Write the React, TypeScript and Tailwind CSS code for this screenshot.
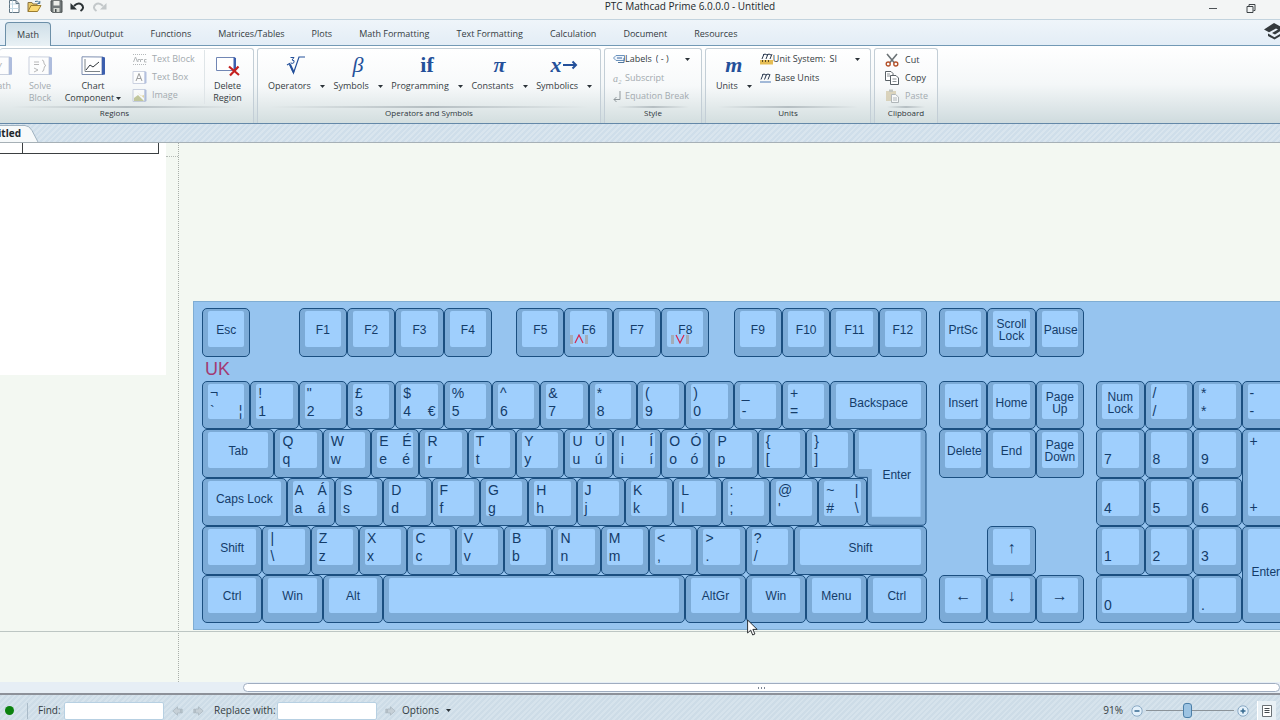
import type { ReactNode } from "react";

type KeyDef = {
  cls: string;
  label?: string[];
  arrow?: string;
  left?: string[];
  right?: string[];
};

const UNIT = "col-span-4";

const tabs = [
  "Input/Output",
  "Functions",
  "Matrices/Tables",
  "Plots",
  "Math Formatting",
  "Text Formatting",
  "Calculation",
  "Document",
  "Resources",
];

const functionKeys: KeyDef[] = [
  { cls: "col-span-4", label: ["Esc"] },
  { cls: "col-span-4 col-start-9", label: ["F1"] },
  { cls: UNIT, label: ["F2"] },
  { cls: UNIT, label: ["F3"] },
  { cls: UNIT, label: ["F4"] },
  { cls: "col-span-4 col-start-27", label: ["F5"] },
  { cls: UNIT, label: ["F6"] },
  { cls: UNIT, label: ["F7"] },
  { cls: UNIT, label: ["F8"] },
  { cls: "col-span-4 col-start-45", label: ["F9"] },
  { cls: UNIT, label: ["F10"] },
  { cls: UNIT, label: ["F11"] },
  { cls: UNIT, label: ["F12"] },
];

const pair = (top: string, bottom: string, right?: string[]): KeyDef => ({
  cls: UNIT,
  left: [top, bottom],
  right,
});

const numberRow: KeyDef[] = [
  pair("¬", "`", ["", "¦"]),
  pair("!", "1"),
  pair('"', "2"),
  pair("£", "3"),
  pair("$", "4", ["", "€"]),
  pair("%", "5"),
  pair("^", "6"),
  pair("&", "7"),
  pair("*", "8"),
  pair("(", "9"),
  pair(")", "0"),
  pair("_", "-"),
  pair("+", "="),
  { cls: "col-span-8", label: ["Backspace"] },
];

const topRow: KeyDef[] = [
  { cls: "col-span-6", label: ["Tab"] },
  pair("Q", "q"),
  pair("W", "w"),
  pair("E", "e", ["É", "é"]),
  pair("R", "r"),
  pair("T", "t"),
  pair("Y", "y"),
  pair("U", "u", ["Ú", "ú"]),
  pair("I", "i", ["Í", "í"]),
  pair("O", "o", ["Ó", "ó"]),
  pair("P", "p"),
  pair("{", "["),
  pair("}", "]"),
];

const homeRow: KeyDef[] = [
  { cls: "col-span-7", label: ["Caps Lock"] },
  pair("A", "a", ["Á", "á"]),
  pair("S", "s"),
  pair("D", "d"),
  pair("F", "f"),
  pair("G", "g"),
  pair("H", "h"),
  pair("J", "j"),
  pair("K", "k"),
  pair("L", "l"),
  pair(":", ";"),
  pair("@", "'"),
  // shares a column with the wide top of Enter, so it is placed explicitly
  {
    cls: "col-span-4 col-start-52 row-start-3",
    left: ["~", "#"],
    right: ["|", "\\"],
  },
];

const bottomRow: KeyDef[] = [
  { cls: "col-span-5 col-start-1 row-start-4", label: ["Shift"] },
  pair("|", "\\"),
  pair("Z", "z"),
  pair("X", "x"),
  pair("C", "c"),
  pair("V", "v"),
  pair("B", "b"),
  pair("N", "n"),
  pair("M", "m"),
  pair("<", ","),
  pair(">", "."),
  pair("?", "/"),
  { cls: "col-span-11", label: ["Shift"] },
];

const spaceRow: KeyDef[] = [
  { cls: "col-span-5", label: ["Ctrl"] },
  { cls: "col-span-5", label: ["Win"] },
  { cls: "col-span-5", label: ["Alt"] },
  { cls: "col-span-25" },
  { cls: "col-span-5", label: ["AltGr"] },
  { cls: "col-span-5", label: ["Win"] },
  { cls: "col-span-5", label: ["Menu"] },
  { cls: "col-span-5", label: ["Ctrl"] },
];

const systemKeys: KeyDef[] = [
  { cls: "", label: ["PrtSc"] },
  { cls: "", label: ["Scroll", "Lock"] },
  { cls: "", label: ["Pause"] },
];

const navKeys: KeyDef[] = [
  { cls: "", label: ["Insert"] },
  { cls: "", label: ["Home"] },
  { cls: "", label: ["Page", "Up"] },
  { cls: "", label: ["Delete"] },
  { cls: "", label: ["End"] },
  { cls: "", label: ["Page", "Down"] },
  { cls: "col-start-2 row-start-4", arrow: "↑" },
  { cls: "col-start-1 row-start-5", arrow: "←" },
  { cls: "row-start-5", arrow: "↓" },
  { cls: "row-start-5", arrow: "→" },
];

const numpadKeys: KeyDef[] = [
  { cls: "", label: ["Num", "Lock"] },
  { cls: "", left: ["/", "/"] },
  { cls: "", left: ["*", "*"] },
  { cls: "", left: ["-", "-"] },
  { cls: "", left: ["", "7"] },
  { cls: "", left: ["", "8"] },
  { cls: "", left: ["", "9"] },
  { cls: "row-span-2", left: ["+", "+"] },
  { cls: "", left: ["", "4"] },
  { cls: "", left: ["", "5"] },
  { cls: "", left: ["", "6"] },
  { cls: "", left: ["", "1"] },
  { cls: "", left: ["", "2"] },
  { cls: "", left: ["", "3"] },
  { cls: "row-span-2", label: ["Enter"] },
  { cls: "col-span-2", left: ["", "0"] },
  { cls: "", left: ["", "."] },
];

const Legend = ({ lines }: { lines: string[] }) => (
  <span className="flex flex-col justify-between">
    {lines.map((line, i) => (
      <span key={i} className="block h-[18px] shrink-0">
        {line}
      </span>
    ))}
  </span>
);

const Key = ({ def }: { def: KeyDef }) => (
  <kbd
    className={`${def.cls} block min-w-0 rounded-[5px] border border-[#1b4f80] bg-[#7cabd7] px-[5px] pt-0.5 pb-[9px] font-[Liberation_Sans,sans-serif]`}
  >
    <span className="flex h-full items-center rounded-[2px] bg-[#9fcffd] px-0.5">
      {def.label && (
        <span className="w-full whitespace-nowrap pt-0.5 text-center text-xs leading-3">
          {def.label.map((line) => (
            <span key={line} className="block">
              {line}
            </span>
          ))}
        </span>
      )}
      {def.arrow && (
        <span className="w-full pt-0.5 text-center text-base leading-5">
          {def.arrow}
        </span>
      )}
      {def.left && (
        <span className="flex h-full w-full justify-between text-sm leading-[18px]">
          <Legend lines={def.left} />
          {def.right && <Legend lines={def.right} />}
        </span>
      )}
    </span>
  </kbd>
);

const Keys = ({ defs }: { defs: KeyDef[] }) => (
  <>
    {defs.map((def, i) => (
      <Key key={i} def={def} />
    ))}
  </>
);

const EnterKey = () => (
  <kbd className="relative col-span-6 col-start-55 row-span-2 row-start-2 block font-[Liberation_Sans,sans-serif]">
    <svg
      className="absolute inset-0 h-full w-full"
      viewBox="0 0 73 97"
      preserveAspectRatio="none"
    >
      <path
        d="M4.500 .5H68.500Q72.500 .5 72.500 4.500V92Q72.500 96.500 68.500 96.500H18Q13.500 96.500 13.500 92V48.500H4.500Q.5 48.500 .5 44.500V4.500Q.5 .5 4.500 .5Z"
        fill="#7cabd7"
        stroke="#1b4f80"
      />
      <path d="M5 3H67V88H18V40H5Z" fill="#9fcffd" />
    </svg>
    <span className="relative flex h-full items-center justify-center pb-1.5 pl-3 text-xs">
      Enter
    </span>
  </kbd>
);

const RegionMark = ({ className, d }: { className: string; d: string }) => (
  <svg
    className={`${className} absolute top-[26px] h-[11px] w-[18px]`}
    viewBox="0 0 18 11"
    fill="none"
  >
    <path d="M0 1h3v9H0zM15 1h3v9h-3z" fill="#a3adb9" />
    <path d={d} stroke="#d5264f" strokeWidth="1.200" />
  </svg>
);

const Keyboard = () => (
  <section
    aria-label="UK keyboard"
    className="w-max border border-[#7fadd3] bg-[#96c4ef] pt-[6px] pr-2 pb-[6px] pl-2 text-[#143c69]"
  >
    <div className="flex gap-3">
      <div className="relative grid h-[49px] w-[725px] grid-cols-60">
        <Keys defs={functionKeys} />
        <RegionMark className="left-[368px]" d="M5 9 9 1l4 8" />
        <RegionMark className="left-[469px]" d="M5 1 9 9l4-8" />
      </div>
      <div className="grid w-[145px] grid-cols-3">
        <Keys defs={systemKeys} />
      </div>
    </div>
    <div className="h-6 pl-[3px] font-[Liberation_Sans,sans-serif] text-lg leading-6 text-[#a33a72]">
      UK
    </div>
    <div className="flex h-[242px] gap-3">
      <div className="grid w-[725px] grid-cols-60 grid-rows-5">
        <Keys defs={numberRow} />
        <Keys defs={topRow} />
        <EnterKey />
        <Keys defs={homeRow} />
        <Keys defs={bottomRow} />
        <Keys defs={spaceRow} />
      </div>
      <div className="grid w-[145px] grid-cols-3 grid-rows-5">
        <Keys defs={navKeys} />
      </div>
      <div className="grid w-[194px] grid-cols-4 grid-rows-5">
        <Keys defs={numpadKeys} />
      </div>
    </div>
  </section>
);

const Caret = () => (
  <svg className="h-[3px] w-[5px] shrink-0" viewBox="0 0 5 3">
    <path d="M0 0h5L2.500 3z" fill="#2b3238" />
  </svg>
);

const Group = ({
  title,
  className,
  children,
}: {
  title: string;
  className: string;
  children: ReactNode;
}) => (
  <section
    className={`${className} flex shrink-0 flex-col overflow-hidden rounded-t-[3px] border border-b-0 border-[#c3ced6] bg-linear-to-b from-white via-[#f7f9fa] to-[#d3dedf]`}
  >
    <div className="flex h-[57px] items-start">{children}</div>
    <div className="mx-3 h-0.5 bg-linear-to-r from-transparent via-[#b5bec2] to-transparent" />
    <h2 className="text-center text-[8px] leading-[10px] text-[#2f363c]">{title}</h2>
  </section>
);

const MathButton = ({
  icon,
  label,
}: {
  icon: ReactNode;
  label: string;
}) => (
  <button className="flex flex-col items-center">
    <span className="flex h-[31px] items-center font-[Liberation_Serif,serif] text-[22px] leading-[30px] text-[#24509a]">
      {icon}
    </span>
    <span className="flex items-center gap-[9px] leading-3">
      {label}
      <Caret />
    </span>
  </button>
);

const SmallButton = ({
  icon,
  label,
  disabled,
}: {
  icon: ReactNode;
  label: string;
  disabled?: boolean;
}) => (
  <button
    disabled={disabled}
    className="flex h-[18px] items-center gap-1 whitespace-nowrap disabled:text-[#a3aaaf]"
  >
    {icon}
    {label}
  </button>
);

const BoxIcon = ({ children, faded }: { children: ReactNode; faded?: boolean }) => (
  <svg
    className={faded ? "h-5 w-[25px] opacity-40" : "h-5 w-[25px]"}
    viewBox="0 0 25 20"
    fill="none"
  >
    <path d="M1 .8 21 1v17.500H1z" fill="#fff" stroke="#7e8fb0" />
    <path d="M21 .5 24 1.500v17L21 19z" fill="#3c5fae" />
    {children}
  </svg>
);

const SmallBox = ({ children }: { children: ReactNode }) => (
  <svg className="h-[13px] w-4 opacity-50" viewBox="0 0 16 13" fill="none">
    <path d="M1 .5h12v12H1z" fill="#fff" stroke="#a0abc8" />
    <path d="M12.500 0 14.500 1v11l-2 1z" fill="#7088c4" />
    {children}
  </svg>
);

const ArrowIcon = ({ back }: { back?: boolean }) => (
  <svg
    className={back ? "h-[10px] w-[11px] -scale-x-100" : "h-[10px] w-[11px]"}
    viewBox="0 0 11 10"
  >
    <path
      d="M.8 3h1v4h-1zM2.500 3H5.500V.8L10.200 5 5.500 9.200V7h-3z"
      fill="#c6d0d7"
      stroke="#a7b4bd"
      strokeWidth=".7"
    />
  </svg>
);

const ZoomIcon = ({ plus }: { plus?: boolean }) => (
  <svg className="h-3 w-3" viewBox="0 0 12 12" fill="none">
    <circle cx="6" cy="6" r="5.200" fill="#e3f0fa" stroke="#8aa9c4" />
    <path d={plus ? "M3.500 6h5M6 3.500v5" : "M3.500 6h5"} stroke="#35688f" strokeWidth="1.500" />
  </svg>
);

const TitleBar = () => (
  <header className="flex h-[19px] shrink-0 items-start bg-[#f3f5f5]">
    <div className="flex w-[200px] items-center gap-[7px] pl-2">
      <button aria-label="New">
        <svg className="h-[13px] w-3" viewBox="0 0 12 13" fill="none">
          <path d="M1.500.5h6.500l3 3v9H1.500z" fill="#fff" stroke="#5f7482" />
          <path d="M4.500.5v12M1.500 4h9M1.500 8.500h9" stroke="#c6dbe5" />
          <path d="M8 .5v3h3" stroke="#5f7482" />
        </svg>
      </button>
      <button aria-label="Open">
        <svg className="h-[13px] w-[15px]" viewBox="0 0 15 13" fill="none">
          <path d="M1 11.500v-9h4l1 1.500h4v2" fill="#e9c968" stroke="#8a7340" />
          <path d="m1 11.500 3-6h10l-3.500 6z" fill="#fbd972" stroke="#9b7c2f" />
          <path d="M8 1.500q3-1.500 4.500 1.500M12.800 1v2.500h-2.500" stroke="#43708e" />
        </svg>
      </button>
      <button aria-label="Save" className="pl-px">
        <svg className="h-[13px] w-[13px]" viewBox="0 0 13 13" fill="none">
          <path d="M1 .8h11v11.500H2.500L1 11z" fill="#72797a" stroke="#4a5051" />
          <path d="M3.500 1h6v4.500h-6z" fill="#eceeea" />
          <path d="M3.500 8h6v4h-6z" fill="#d4d8d2" />
          <path d="M5 9h1.500v3H5z" fill="#4a5051" />
        </svg>
      </button>
      <button aria-label="Undo">
        <svg className="h-[11px] w-[15px]" viewBox="0 0 15 11" fill="none">
          <path d="M4 5q4-4 7.500-1.500Q15 7 10.500 10" stroke="#2c3336" strokeWidth="2" />
          <path d="M.5 2v6.500H7z" fill="#2c3336" />
        </svg>
      </button>
      <button aria-label="Redo" disabled>
        <svg className="h-[11px] w-[15px] -scale-x-100" viewBox="0 0 15 11" fill="none">
          <path d="M4 5q4-4 7.500-1.500Q15 7 10.500 10" stroke="#c3c8ca" strokeWidth="2" />
          <path d="M.5 2v6.500H7z" fill="#c3c8ca" />
        </svg>
      </button>
    </div>
    <h1 className="flex-1 text-center text-[10px] leading-3 text-[#22282c]">
      PTC Mathcad Prime 6.0.0.0 - Untitled
    </h1>
    <div className="flex w-[100px] items-center gap-7 pt-0.5 pl-7">
      <button aria-label="Minimize">
        <svg className="h-3 w-[10px]" viewBox="0 0 10 12">
          <path d="M1 6h8v1H1z" fill="#4c5256" />
        </svg>
      </button>
      <button aria-label="Restore">
        <svg className="h-3 w-[10px]" viewBox="0 0 10 12" fill="none" stroke="#3c4246">
          <path d="M1 4.500h6v6H1zM3 4V2.500h6v6H7.500" />
        </svg>
      </button>
    </div>
  </header>
);

const TabBar = () => (
  <nav className="flex h-[27px] shrink-0 items-end border-t border-b border-t-[#c2d3de] border-b-[#7299b5] bg-linear-to-b from-[#eff5fa] to-[#e3edf6] pl-[5px]">
    <button className="-mb-px h-6 w-[46px] rounded-t-[4px] border border-b-0 border-[#6c8fa8] bg-linear-to-b from-[#cfdfe8] to-[#e9f1f5]">
      Math
    </button>
    <div className="flex flex-1 gap-px pl-1">
      {tabs.map((tab) => (
        <button key={tab} className="h-[22px] px-[13px] whitespace-nowrap">
          {tab}
        </button>
      ))}
    </div>
    <button aria-label="Learn" className="-mr-1 mb-1">
      <svg className="h-5 w-5" viewBox="0 0 20 20">
        <path d="M0 8.500 10 2l10 5.500-9 6L8 12l6-3.500-2-1-7 3.800z" fill="#343a3d" />
        <path d="m4 12.500 6.500 3.700 7-4.200v2.500l-7 4L4 15z" fill="#343a3d" />
      </svg>
    </button>
  </nav>
);

const Ribbon = () => (
  <div className="flex h-[78px] shrink-0 items-stretch gap-[3px] overflow-hidden border-b border-[#6488a8] bg-linear-to-b from-white via-[#f4f7f8] to-[#cfdbde] pt-0.5">
    <Group title="Regions" className="w-[254px] border-l-0 [&>h2]:pr-6">
      <div className="flex h-full w-full justify-end pt-px pr-[3px] leading-3">
        <button disabled className="flex w-6 shrink-0 flex-col items-center self-start pt-1.5 text-[#a3aaaf]">
          <BoxIcon faded>
            <text x="8" y="14" fontSize="12" fontStyle="italic" fill="#555">
              y
            </text>
          </BoxIcon>
          <span className="pt-1">Math</span>
        </button>
        <button disabled className="ml-3 flex w-8 shrink-0 flex-col items-center self-start pt-1.5 text-[#a3aaaf]">
          <BoxIcon faded>
            <path d="M6 6h5M6 8.500h5M6 12l4 2-4 2M14 4q2 0 2 3 0 2 2 2.500-2 .5-2 3 0 3-2 3" stroke="#555" />
          </BoxIcon>
          <span className="pt-1">
            Solve
            <br />
            Block
          </span>
        </button>
        <button className="ml-1.5 flex w-[62px] shrink-0 flex-col items-center self-start pt-1.5">
          <BoxIcon>
            <path d="M4 3v12.500h15" stroke="#7c8488" />
            <path d="m5 14 4-5 3 2 6-5" stroke="#30363a" />
          </BoxIcon>
          <span className="pt-1">Chart</span>
          <span className="flex items-center gap-0.5">
            Component
            <Caret />
          </span>
        </button>
        <div className="flex w-20 shrink-0 flex-col pl-2">
          <SmallButton
            disabled
            label="Text Block"
            icon={
              <svg className="h-[13px] w-4 opacity-50" viewBox="0 0 16 13" fill="none" stroke="#6f7679">
                <path d="M1 1.500h14M1 11.500h14" strokeDasharray="1 1" />
                <path d="m1.500 9 2-5 2 5M6 9V6.500h2M8.500 9V6.500H11M14.500 6.500h-2V9h2" />
              </svg>
            }
          />
          <SmallButton
            disabled
            label="Text Box"
            icon={
              <SmallBox>
                <path d="m4 10 3-7.500L10 10M5 7.500h4" stroke="#444" />
              </SmallBox>
            }
          />
          <SmallButton
            disabled
            label="Image"
            icon={
              <SmallBox>
                <path d="M2 12V9l4-3 6 6z" fill="#9a9f4a" />
                <path d="m5 3 4 4 3-1v3z" fill="#d8bc5a" />
              </SmallBox>
            }
          />
        </div>
        <button className="flex w-[46px] shrink-0 flex-col items-center self-start border-l border-[#dfe5e8] pt-1.5">
          <svg className="h-[22px] w-6" viewBox="0 0 24 22" fill="none">
            <path d="M.5 1.500h18v13H.5z" fill="#fff" stroke="#7186b4" />
            <path d="m17.500 1 2.500 1v13h-2.500z" fill="#3c5fae" />
            <path d="m13 10.500 10 8.500M22.500 10.500 14 19.500" stroke="#c4201f" strokeWidth="2.200" />
          </svg>
          <span className="pt-0.5">
            Delete
            <br />
            Region
          </span>
        </button>
      </div>
    </Group>

    <Group title="Operators and Symbols" className="w-[344px]">
      <div className="flex w-full justify-between pr-2 pl-2.5">
        <MathButton
          label="Operators"
          icon={
            <svg className="h-5 w-5" viewBox="0 0 20 20" fill="none" stroke="#24509a">
              <path d="M1 10l2.500-1.500 4 9.500L13 2h6" strokeWidth="1.200" />
              <path d="M4 9.500l3.500 7.500" strokeWidth="2" />
              <path d="M4.500 2.500h3.500L6 5q3 0 2 2.500-1 1.500-3.500 .5" />
            </svg>
          }
        />
        <MathButton label="Symbols" icon={<i>β</i>} />
        <MathButton label="Programming" icon={<b>if</b>} />
        <MathButton label="Constants" icon={<i className="font-bold">π</i>} />
        <MathButton
          label="Symbolics"
          icon={
            <>
              <i className="font-bold">x</i>
              <svg className="h-[10px] w-4" viewBox="0 0 16 10" fill="none">
                <path d="M1 5h13M10.500 1.500 14 5l-3.500 3.500" stroke="#24509a" strokeWidth="2" />
              </svg>
            </>
          }
        />
      </div>
    </Group>

    <Group title="Style" className="w-[98px]">
      <div className="flex w-full flex-col pl-2">
        <div className="flex h-5 items-center">
          <svg className="h-3 w-3" viewBox="0 0 12 12" fill="none">
            <path d="M.5 5 3 2.500h8.500v5H3z" fill="#eef4fb" stroke="#6b93bd" />
            <path d="M5 9.500h6V5" stroke="#52779d" />
            <path d="M4 5h5" stroke="#3b66a0" />
          </svg>
          <label htmlFor="labels">Labels</label>
          <select
            id="labels"
            className="ml-1 w-[29px] appearance-none bg-transparent"
            defaultValue="( - )"
          >
            <option>( - )</option>
          </select>
          <Caret />
        </div>
        <SmallButton
          disabled
          label="Subscript"
          icon={
            <span className="w-2 font-[Liberation_Serif,serif] text-[10px] italic">
              a₂
            </span>
          }
        />
        <SmallButton
          disabled
          label="Equation Break"
          icon={
            <svg className="h-[11px] w-2" viewBox="0 0 8 11" fill="none" stroke="#8f979b">
              <path d="M7 0v8.500H1M3.500 6 1 8.500 3.500 11" />
            </svg>
          }
        />
      </div>
    </Group>

    <Group title="Units" className="w-[166px]">
      <div className="flex w-full gap-2 pl-2.5">
        <MathButton label="Units" icon={<i className="font-bold">m</i>} />
        <div className="flex flex-col">
          <div className="flex h-5 items-center">
            <svg className="h-3 w-[13px]" viewBox="0 0 13 12" fill="none">
              <path d="M0 7h13v4.500H0z" fill="#e5bd55" />
              <path d="M2.500 7v2M5.500 7v2M8.500 7v2" stroke="#5c4a1f" />
              <path d="M2 6 4 1M6 6l2-5M10 6l2-5M3 2q2-2 4 0M7 2q2-2 4 0" stroke="#26354b" />
            </svg>
            <label htmlFor="unit-system" className="whitespace-nowrap">
              Unit System:
            </label>
            <select
              id="unit-system"
              className="ml-1 w-[26px] appearance-none bg-transparent"
              defaultValue="SI"
            >
              <option>SI</option>
            </select>
            <Caret />
          </div>
          <SmallButton
            label="Base Units"
            icon={
              <svg className="h-[10px] w-[11px]" viewBox="0 0 11 10" fill="none">
                <path d="M1 6.500 3 1.500M4.500 6.500l2-5M8 6.500l2-5M2 2q2-2 4 0M6 2q2-2 4 0" stroke="#26354b" />
                <path d="M0 9h11" stroke="#4d78b5" />
              </svg>
            }
          />
        </div>
      </div>
    </Group>

    <Group title="Clipboard" className="w-16">
      <div className="flex w-full flex-col pt-0.5 pl-2.5 [&>button]:gap-1.5">
        <SmallButton
          label="Cut"
          icon={
            <svg className="h-[14px] w-[14px]" viewBox="0 0 14 14" fill="none">
              <path d="M2 1l7.500 9M12 1 4.500 10" stroke="#6c7376" strokeWidth="1.600" />
              <circle cx="3.200" cy="11" r="2" stroke="#b5532c" strokeWidth="1.400" />
              <circle cx="10.800" cy="11" r="2" stroke="#b5532c" strokeWidth="1.400" />
            </svg>
          }
        />
        <SmallButton
          label="Copy"
          icon={
            <svg className="h-[14px] w-[14px]" viewBox="0 0 14 14" fill="#fff" stroke="#596166">
              <path d="M.5.5H6l2 2v7H.5z" />
              <path d="M5.500 4.500H11l2.500 2.500v6.500h-8z" />
              <path d="M2 3h3M2 5h3M7.500 8h4M7.500 10.500h4" stroke="#8b9296" />
            </svg>
          }
        />
        <SmallButton
          disabled
          label="Paste"
          icon={
            <svg className="h-[14px] w-[14px] opacity-60" viewBox="0 0 14 14">
              <path d="M1 2h10v10H1z" fill="#cdbf98" />
              <path d="M4 .5h4V3H4z" fill="#a3a89f" />
              <path d="M6.500 5.500h4l3 2.500v5.500h-7z" fill="#fff" stroke="#8b9296" />
              <path d="M8 9h4M8 11h4" stroke="#8b9296" />
            </svg>
          }
        />
      </div>
    </Group>
  </div>
);

const DocumentTabs = () => (
  <div className="flex h-[19px] shrink-0 items-end border-b border-[#a6b0b6] bg-[repeating-linear-gradient(135deg,#cfdeea_0px,#cfdeea_2px,#d9e5ee_2px,#d9e5ee_4px)]">
    <div className="relative h-[17px] w-10">
      <svg className="absolute inset-0 h-full w-full" viewBox="0 0 40 17" fill="none">
        <path d="M0 .5h25q4 0 7 5l6 11.500H0z" fill="#f6f9fa" />
        <path d="M0 .5h25q4 0 7 5l6 11.500" stroke="#9fb2c0" />
      </svg>
      <button className="relative flex h-full w-[21px] items-center justify-end text-[10px] font-bold text-[#20262a]">
        Untitled
      </button>
    </div>
  </div>
);

const Worksheet = () => (
  <main className="relative flex flex-1 overflow-hidden bg-[#f3f8f2]">
    <div className="h-[232px] w-[166px] shrink-0 bg-white">
      <div className="flex h-[11px] w-[159px] border-r border-b border-[#3b3f41]">
        <div className="w-[23px] border-r border-[#3b3f41]" />
      </div>
    </div>
    <div className="w-[13px] shrink-0 border-r border-dotted border-[#a9afaa]">
      <div className="h-[14px] border-b border-dotted border-[#b4bab5]" />
    </div>
    <div className="shrink-0 pt-[158px] pl-3.5">
      <Keyboard />
    </div>
    <div className="absolute top-[488px] left-0 h-px w-full bg-[#bcc6c3]" />
    <svg className="absolute top-[476px] left-[747px] h-[17px] w-3" viewBox="0 0 12 17">
      <path
        d="M.6 1v13l3.100-2.900 2 4.900 2.200-1-2-4.600h4.300z"
        fill="#fff"
        stroke="#1b1f22"
        strokeWidth=".9"
      />
    </svg>
  </main>
);

const ScrollBar = () => (
  <div className="flex h-[11px] shrink-0 items-center bg-[#e6eef5] pl-[243px]">
    <div className="flex h-[9px] flex-1 items-center justify-center rounded-full border border-[#9fadc0] bg-white">
      <svg className="h-0.5 w-[7px]" viewBox="0 0 7 2">
        <path d="M0 0h1v2H0zM3 0h1v2H3zM6 0h1v2H6z" fill="#7d8794" />
      </svg>
    </div>
  </div>
);

const StatusBar = () => (
  <footer className="flex h-[27px] shrink-0 items-center border-t-2 border-[#8d9199] bg-[repeating-linear-gradient(135deg,#cddce7_0px,#cddce7_2px,#d6e3ec_2px,#d6e3ec_4px)] pt-[6px] pr-1 text-[10px]">
    <span className="ml-[5px] h-[9px] w-[9px] rounded-full bg-[#0b820f]" />
    <span className="ml-[13px] h-4 w-px bg-[#a9bac7]" />
    <label htmlFor="find" className="ml-2.5 w-[26px] whitespace-nowrap">
      Find:
    </label>
    <input
      id="find"
      className="h-[18px] w-[100px] rounded-[2px] border border-[#b7d0e2] bg-white px-1"
    />
    <button aria-label="Find previous" className="ml-2">
      <ArrowIcon back />
    </button>
    <button aria-label="Find next" className="ml-2.5">
      <ArrowIcon />
    </button>
    <label htmlFor="replace" className="ml-2.5 w-[63px] whitespace-nowrap">
      Replace with:
    </label>
    <input
      id="replace"
      className="h-[18px] w-[100px] rounded-[2px] border border-[#b7d0e2] bg-white px-1"
    />
    <button aria-label="Replace" className="mr-1.5 ml-2">
      <ArrowIcon />
    </button>
    <button className="flex items-center gap-[7px]">
      Options
      <Caret />
    </button>
    <label htmlFor="zoom" className="mr-2 ml-auto">
      91%
    </label>
    <button aria-label="Zoom out">
      <ZoomIcon />
    </button>
    <div className="mx-[3px] flex w-[88px] items-center bg-[linear-gradient(#8b9399,#8b9399)] bg-[length:100%_1px] bg-center bg-no-repeat">
      <input
        id="zoom"
        type="range"
        defaultValue={47}
        className="h-4 w-full appearance-none bg-transparent [&::-webkit-slider-thumb]:h-[15px] [&::-webkit-slider-thumb]:w-[9px] [&::-webkit-slider-thumb]:appearance-none [&::-webkit-slider-thumb]:rounded-[3px] [&::-webkit-slider-thumb]:border [&::-webkit-slider-thumb]:border-[#4c7fa8] [&::-webkit-slider-thumb]:bg-[#9cc3e2]"
      />
    </div>
    <button aria-label="Zoom in">
      <ZoomIcon plus />
    </button>
    <button
      aria-label="Page view"
      className="ml-2 flex h-[19px] items-center border-l border-white bg-[#e8f0f5] px-1"
    >
      <svg className="h-3 w-[10px]" viewBox="0 0 10 12" fill="#fff" stroke="#6a7176">
        <path d="M.5.500h9v11h-9z" />
        <path d="M2.500 3.500h5M2.500 5.500h5M2.500 7.500h5" stroke="#43494d" />
      </svg>
    </button>
  </footer>
);

export default function App() {
  return (
    <div className="flex h-screen flex-col overflow-hidden bg-[#f3f5f5] font-[Open_Sans,sans-serif] text-[9px] text-[#353c42]">
      <TitleBar />
      <TabBar />
      <Ribbon />
      <DocumentTabs />
      <Worksheet />
      <ScrollBar />
      <StatusBar />
    </div>
  );
}
